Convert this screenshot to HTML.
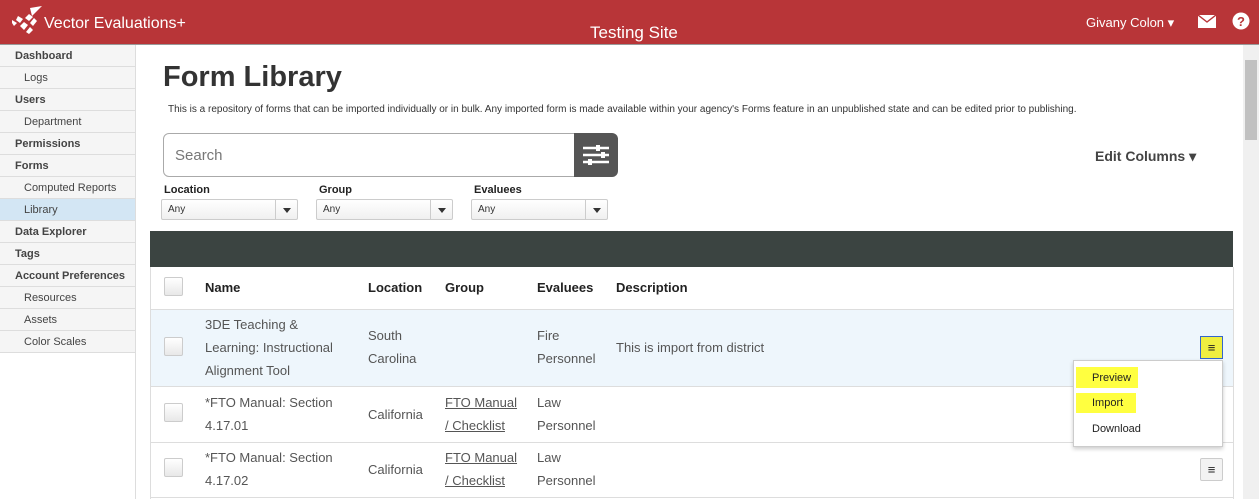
<!DOCTYPE html><html><head><style>
*{box-sizing:border-box;margin:0;padding:0}
body{width:1259px;height:499px;overflow:hidden;font-family:"Liberation Sans",sans-serif;background:#fff;position:relative;color:#333}
.hdr{position:absolute;left:0;top:0;width:1259px;height:45px;background:#b83538;border-bottom:1px solid #999;color:#fff}
.abs{position:absolute}
.side{position:absolute;left:0;top:45px;width:136px;height:454px;background:#fff;border-right:1px solid #ddd}
.side div{height:22px;border-bottom:1px solid #ddd;font-size:11px;line-height:22px;padding-left:15px;background:#f5f5f5;color:#444}
.side .b{font-weight:bold}
.side .s{padding-left:24px}
.side .a{background:#d3e6f4}
.sel{position:absolute;height:21px;border:1px solid #ccc;border-radius:2px;background:linear-gradient(#fff,#f0f0f0);font-size:10px;line-height:20px;padding-left:6px;color:#333}
.sel i{position:absolute;right:0;top:0;width:22px;height:19px;border-left:1px solid #ccc}
.sel i:after{content:"";position:absolute;left:7px;top:8px;border:4px solid transparent;border-top:5px solid #333}
.lbl{position:absolute;font-size:11px;font-weight:bold;color:#222}
.cb{position:absolute;left:164px;width:19px;height:19px;border:1px solid #ccc;border-radius:2px;background:linear-gradient(#fff,#e8e8e8)}
.t{position:absolute;font-size:13px;line-height:23px;color:#555}
.u{text-decoration:underline}
.hl{background:#ffff40}
</style></head><body>
<div class="hdr">
<svg class="abs" style="left:10px;top:6px" width="34" height="30" viewBox="0 0 34 30"><g fill="#fff"><path d="M20 2 L32 0 L22 10z"/><path d="M2 14l5 3-3 3-2-3z"/><path d="M8 10l5 3-3 4-4-3z"/><path d="M10 20l4-4 4 3-4 5z"/><path d="M15 12l4-4 4 3-4 4z"/><path d="M16 26l4-5 3 3-4 4z"/><path d="M20 17l4-5 3 3-4 5z"/></g></svg>
<div class="abs" style="left:44px;top:15px;font-size:16px">Vector Evaluations+</div>
<div class="abs" style="left:590px;top:23px;font-size:17px">Testing Site</div>
<div class="abs" style="left:1086px;top:15px;font-size:13px">Givany Colon ▾</div>
<svg class="abs" style="left:1198px;top:15px" width="18" height="13" viewBox="0 0 18 13"><rect width="18" height="13" fill="#fff"/><path d="M0 0l9 7 9-7" stroke="#b83538" stroke-width="1.4" fill="none"/></svg>
<svg class="abs" style="left:1232px;top:12px" width="18" height="18"><circle cx="9" cy="9" r="8.5" fill="#fff"/><text x="9" y="14" text-anchor="middle" font-size="13" font-weight="bold" fill="#b83538" font-family="Liberation Sans">?</text></svg>
</div>
<div class="side">
<div class="b">Dashboard</div><div class="s">Logs</div><div class="b">Users</div><div class="s">Department</div><div class="b">Permissions</div><div class="b">Forms</div><div class="s">Computed Reports</div><div class="s a">Library</div><div class="b">Data Explorer</div><div class="b">Tags</div><div class="b">Account Preferences</div><div class="s">Resources</div><div class="s">Assets</div><div class="s">Color Scales</div>
</div>
<div class="abs" style="left:1243px;top:45px;width:16px;height:454px;background:#f0f0f0"></div>
<div class="abs" style="left:1245px;top:60px;width:12px;height:80px;background:#c1c1c1"></div>
<div class="abs" style="left:163px;top:61px;font-size:29px;font-weight:bold;color:#333">Form Library</div>
<div class="abs" style="left:168px;top:104px;font-size:10px;color:#333">This is a repository of forms that can be imported individually or in bulk. Any imported form is made available within your agency's Forms feature in an unpublished state and can be edited prior to publishing.</div>
<div class="abs" style="left:163px;top:133px;width:412px;height:44px;border:1px solid #aaa;border-radius:6px 0 0 6px;font-size:15px;color:#777;padding:13px 11px">Search</div>
<div class="abs" style="left:574px;top:133px;width:44px;height:44px;background:#555;border-radius:0 6px 6px 0"></div>
<svg class="abs" style="left:581px;top:140px" width="30" height="30"><g stroke="#fff" stroke-width="2.5"><path d="M2 8h26M2 15h26M2 22h26"/></g><g fill="#fff"><rect x="15" y="5" width="4" height="6"/><rect x="20" y="12" width="4" height="6"/><rect x="7" y="19" width="4" height="6"/></g></svg>
<div class="abs" style="left:1095px;top:148px;font-size:14px;font-weight:bold;color:#444">Edit Columns ▾</div>
<div class="lbl" style="left:164px;top:184px">Location</div><div class="lbl" style="left:319px;top:184px">Group</div><div class="lbl" style="left:474px;top:184px">Evaluees</div>
<div class="sel" style="left:161px;top:199px;width:137px">Any<i></i></div>
<div class="sel" style="left:316px;top:199px;width:137px">Any<i></i></div>
<div class="sel" style="left:471px;top:199px;width:137px">Any<i></i></div>
<div class="abs" style="left:150px;top:231px;width:1083px;height:36px;background:#3b4441"></div>
<div class="abs" style="left:150px;top:267px;width:1084px;height:232px;border-left:1px solid #ddd;border-right:1px solid #ddd"></div>
<div class="abs" style="left:151px;top:309px;width:1082px;height:1px;background:#ddd"></div>
<div class="abs" style="left:151px;top:310px;width:1082px;height:77px;background:#eef6fc;border-bottom:1px solid #ddd"></div>
<div class="abs" style="left:151px;top:442px;width:1082px;height:1px;background:#ddd"></div>
<div class="abs" style="left:151px;top:497px;width:1082px;height:1px;background:#ddd"></div>
<div class="cb" style="top:277px"></div><div class="cb" style="top:337px"></div><div class="cb" style="top:403px"></div><div class="cb" style="top:458px"></div>
<div class="t" style="left:205px;top:276px;font-weight:bold;color:#222">Name</div>
<div class="t" style="left:368px;top:276px;font-weight:bold;color:#222">Location</div>
<div class="t" style="left:445px;top:276px;font-weight:bold;color:#222">Group</div>
<div class="t" style="left:537px;top:276px;font-weight:bold;color:#222">Evaluees</div>
<div class="t" style="left:616px;top:276px;font-weight:bold;color:#222">Description</div>
<div class="t" style="left:205px;top:313px">3DE Teaching &amp;<br>Learning: Instructional<br>Alignment Tool</div>
<div class="t" style="left:368px;top:324px">South<br>Carolina</div>
<div class="t" style="left:537px;top:324px">Fire<br>Personnel</div>
<div class="t" style="left:616px;top:336px">This is import from district</div>
<div class="t" style="left:205px;top:391px">*FTO Manual: Section<br>4.17.01</div>
<div class="t" style="left:368px;top:403px">California</div>
<div class="t u" style="left:445px;top:391px">FTO Manual<br>/ Checklist</div>
<div class="t" style="left:537px;top:391px">Law<br>Personnel</div>
<div class="t" style="left:205px;top:446px">*FTO Manual: Section<br>4.17.02</div>
<div class="t" style="left:368px;top:458px">California</div>
<div class="t u" style="left:445px;top:446px">FTO Manual<br>/ Checklist</div>
<div class="t" style="left:537px;top:446px">Law<br>Personnel</div>
<div class="abs" style="left:1200px;top:336px;width:23px;height:23px;border:1px solid #3366cc;background:#f0ef40;font-size:13px;text-align:center;line-height:21px;color:#222">≡</div>
<div class="abs" style="left:1200px;top:458px;width:23px;height:23px;border:1px solid #ccc;border-radius:2px;background:#f3f3f3;font-size:13px;text-align:center;line-height:21px;color:#222">≡</div>
<div class="abs" style="left:1073px;top:360px;width:150px;height:87px;background:#fff;border:1px solid #ccc;box-shadow:0 2px 4px rgba(0,0,0,.2)"></div>
<div class="abs hl" style="left:1076px;top:367px;width:62px;height:21px"></div>
<div class="abs hl" style="left:1076px;top:393px;width:60px;height:20px"></div>
<div class="abs" style="left:1092px;top:372px;font-size:11px;color:#222">Preview</div>
<div class="abs" style="left:1092px;top:397px;font-size:11px;color:#222">Import</div>
<div class="abs" style="left:1092px;top:423px;font-size:11px;color:#222">Download</div>
</body></html>
